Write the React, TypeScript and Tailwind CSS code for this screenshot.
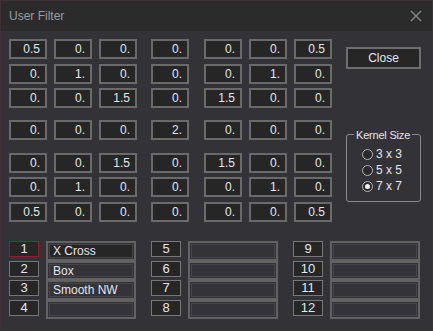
const matrix = [
  ["0.5", "0.", "0.", "0.", "0.", "0.", "0.5"],
  ["0.", "1.", "0.", "0.", "0.", "1.", "0."],
  ["0.", "0.", "1.5", "0.", "1.5", "0.", "0."],
  ["0.", "0.", "0.", "2.", "0.", "0.", "0."],
  ["0.", "0.", "1.5", "0.", "1.5", "0.", "0."],
  ["0.", "1.", "0.", "0.", "0.", "1.", "0."],
  ["0.5", "0.", "0.", "0.", "0.", "0.", "0.5"],
];

// gap above each row, in px
const rowGaps = ["mt-0", "mt-[5px]", "mt-[4px]", "mt-[12px]", "mt-[13px]", "mt-[4px]", "mt-[5px]"];
// gap left of each column
const colGaps = ["ml-0", "ml-[7px]", "ml-[7px]", "ml-[14px]", "ml-[15px]", "ml-[7px]", "ml-[7px]"];

const presets = [
  ["X Cross", "Box", "Smooth NW", ""],
  ["", "", "", ""],
  ["", "", "", ""],
];

const rowHeights = ["h-[20px]", "h-[19px]", "h-[20px]", "h-[19px]"];

function Cell({ value, className }: { value: string; className: string }) {
  return (
    <div
      className={`${className} flex h-[20px] w-[38px] items-center justify-end border-2 border-[#6a6a6a] bg-[#262626] pr-[5px] text-[12px] text-[#e4e6ea]`}
    >
      {value}
    </div>
  );
}

function Radio({ label, checked }: { label: string; checked?: boolean }) {
  return (
    <div className="flex h-[16px] items-center">
      <span className="flex h-[11px] w-[11px] items-center justify-center rounded-full border border-[#b8b8b8] bg-[#2a2a2a]">
        {checked && <span className="h-[5px] w-[5px] rounded-full bg-[#f2f2f2]" />}
      </span>
      <span className="ml-[3px] text-[12px] text-[#e4e6ea]">{label}</span>
    </div>
  );
}

function PresetGroup({ start, names, ml }: { start: number; names: string[]; ml: string }) {
  return (
    <div className={`${ml} flex`}>
      <div className="flex w-[30px] flex-col">
        {names.map((_, i) => (
          <div key={i} className={`${rowHeights[i]}`}>
            <div
              className={`flex h-[16px] w-[30px] items-center justify-center border ${
                start + i === 1 ? "border-[#8a2232]" : "border-[#777777]"
              } bg-[#262626] text-[13px] text-[#e4e6ea]`}
            >
              {start + i}
            </div>
          </div>
        ))}
      </div>
      <div className="ml-[7px] flex w-[90px] flex-col">
        {names.map((name, i) => (
          <div key={i} className={`${rowHeights[i]} border-2 border-[#626262] p-px`}>
            <div
              className={`flex h-full items-center border border-[#454448] px-[3px] text-[12px] text-[#e4e6ea] ${
                start + i === 1 ? "bg-[#262626]" : "bg-[#343337]"
              }`}
            >
              {name}
            </div>
          </div>
        ))}
      </div>
    </div>
  );
}

export default function App() {
  return (
    <div className="h-[331px] w-[433px] overflow-hidden border border-[#3d3336] bg-[#333236] font-['Liberation_Sans',Arial,sans-serif]">
      {/* title bar */}
      <div className="flex h-[30px] items-center justify-between bg-[#2b2b2b] pl-[8px] pr-[9px]">
        <span className="text-[12px] text-[#9b9b9b]">User Filter</span>
        <svg width="12" height="12" viewBox="0 0 12 12" className="mr-[1px]">
          <path d="M1 1 L11 11 M11 1 L1 11" stroke="#8c8c8c" strokeWidth="1.2" />
        </svg>
      </div>

      <div className="flex pl-[8px] pt-[8px]">
        {/* kernel matrix */}
        <div className="flex flex-col">
          {matrix.map((row, r) => (
            <div key={r} className={`${rowGaps[r]} flex`}>
              {row.map((v, c) => (
                <Cell key={c} value={v} className={colGaps[c]} />
              ))}
            </div>
          ))}
        </div>

        {/* right side */}
        <div className="ml-[14px] flex w-[75px] flex-col">
          <button className="mt-[8px] h-[22px] w-[75px] border-2 border-[#6e6e6e] bg-[#262626] text-[12px] text-[#e4e6ea]">
            Close
          </button>
          <div className="relative mt-[65px] h-[68px] rounded-[3px] border border-[#8a8a8a] pl-[15px] pt-[11px]">
            <span className="absolute -top-[8px] left-[7px] bg-[#333236] px-[2px] text-[11px] tracking-[-0.2px] text-[#e4e6ea]">
              Kernel Size
            </span>
            <Radio label="3 x 3" />
            <Radio label="5 x 5" />
            <Radio label="7 x 7" checked />
          </div>
        </div>
      </div>

      {/* presets */}
      <div className="mt-[19px] flex pl-[8px]">
        <PresetGroup start={1} names={presets[0]} ml="ml-0" />
        <PresetGroup start={5} names={presets[1]} ml="ml-[15px]" />
        <PresetGroup start={9} names={presets[2]} ml="ml-[15px]" />
      </div>
    </div>
  );
}
